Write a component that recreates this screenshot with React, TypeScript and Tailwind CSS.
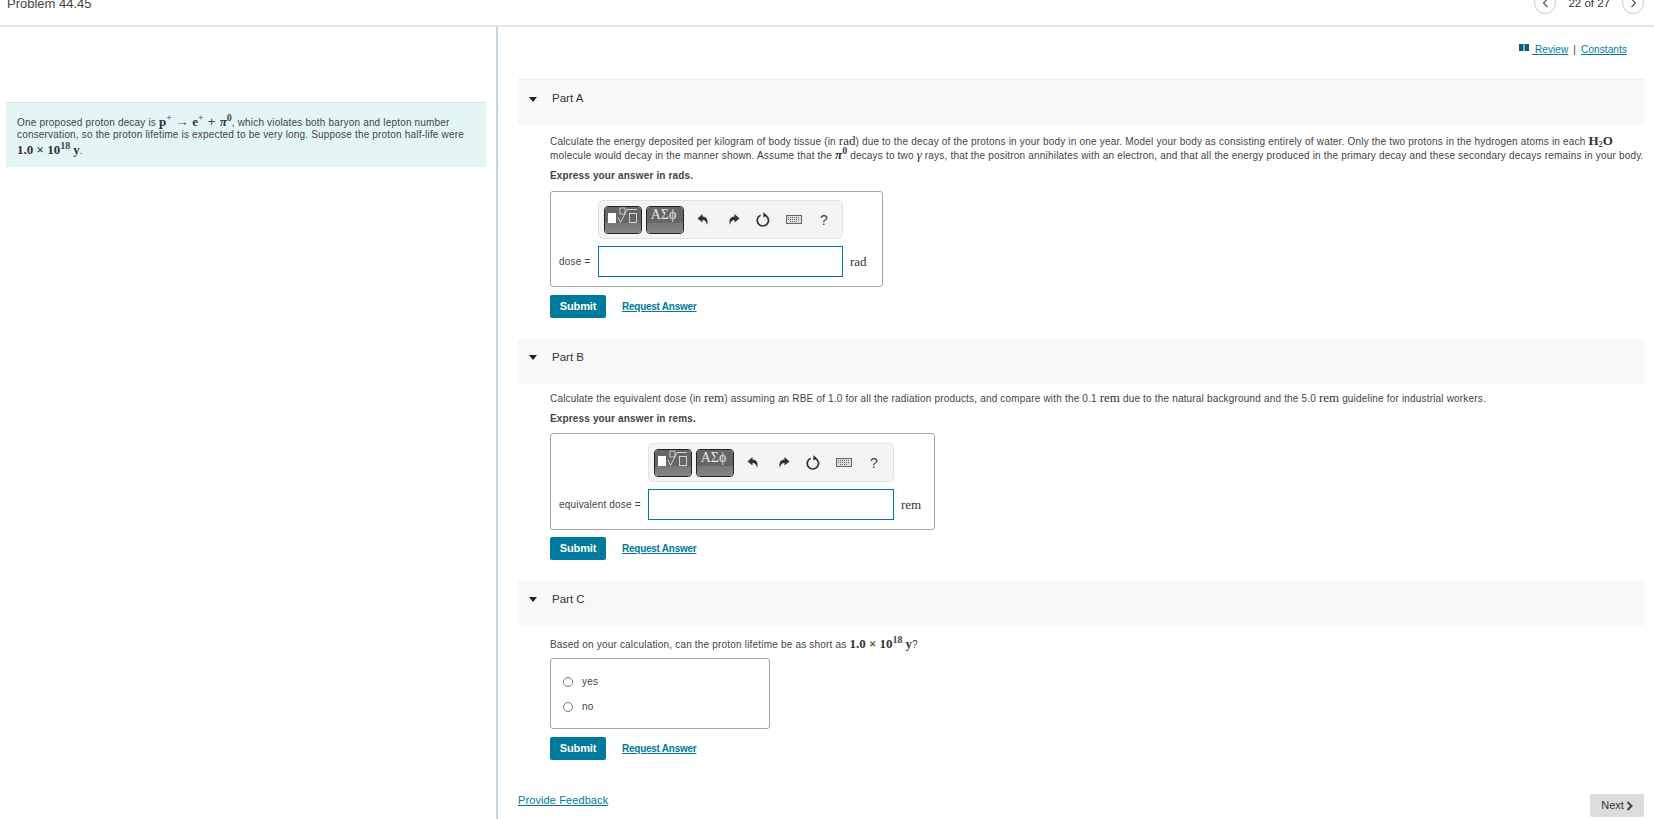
import React from 'react';

const sans = 'font-["Liberation_Sans",Arial,sans-serif]';
const serif = 'font-["Liberation_Serif","Times_New_Roman",serif]';

const M: React.FC<{ children: React.ReactNode; b?: boolean; i?: boolean }> = ({ children, b, i }) => (
  <span className={`${serif} text-[13px] ${b ? 'font-bold' : ''} ${i ? 'italic' : ''} tracking-normal text-[#333]`}>{children}</span>
);

const Sup: React.FC<{ children: React.ReactNode }> = ({ children }) => (
  <sup className={`${serif} text-[10px] font-bold tracking-normal`}>{children}</sup>
);

const PaletteButton: React.FC<{ children: React.ReactNode }> = ({ children }) => (
  <div className="h-[28px] w-[38px] rounded-[4px] border border-[#222] overflow-hidden flex flex-col">
    <div className="h-[16px] bg-[#666] flex items-center justify-center text-[#e4e4e4]">{children}</div>
    <div className="flex-1 bg-gradient-to-b from-[#777] to-[#858585]" />
  </div>
);

const Toolbar: React.FC<{ width: string }> = ({ width }) => (
  <div className={`flex items-center h-[39px] ${width} rounded-[5px] border border-[#e2e2e2] bg-[#f4f4f4] pl-[5px]`}>
    <PaletteButton>
      <svg width="36" height="16" viewBox="0 0 36 16">
        <rect x="3" y="6" width="8" height="10" fill="#fff" />
        <rect x="15" y="1" width="5" height="6" fill="none" stroke="#ddd" strokeWidth="0.8" />
        <path d="M13 10l2.5 5.5L22 2.5h10" fill="none" stroke="#ddd" strokeWidth="0.9" />
        <rect x="24.5" y="6.5" width="7" height="9" fill="none" stroke="#ddd" strokeWidth="0.9" />
      </svg>
    </PaletteButton>
    <div className="w-[4px]" />
    <PaletteButton>
      <span className={`${serif} text-[14px] leading-none tracking-normal -ml-[3px]`}>ΑΣϕ</span>
    </PaletteButton>
    <svg width="12" height="13" viewBox="0 0 12 13" className="ml-[13px]">
      <path d="M5.5 1L0.5 5.5 5.5 9.5V7C8 7 9.5 8.5 10 12 11.5 7.5 10 3.8 5.5 3.6Z" fill="#333" />
    </svg>
    <svg width="12" height="13" viewBox="0 0 12 13" className="ml-[19px]">
      <path d="M6.5 1L11.5 5.5 6.5 9.5V7C4 7 2.5 8.5 2 12 0.5 7.5 2 3.8 6.5 3.6Z" fill="#333" />
    </svg>
    <svg width="14" height="15" viewBox="0 0 14 15" className="ml-[16px]">
      <path d="M8.6 3.1A5.6 5.6 0 1 1 4.6 3.3" fill="none" stroke="#333" strokeWidth="1.7" />
      <path d="M7.3 0.2L10.7 3 7.3 5.4Z" fill="#333" />
    </svg>
    <svg width="16" height="9" viewBox="0 0 16 9" className="ml-[16px]">
      <rect x="0.5" y="0.5" width="15" height="8" fill="#dedede" stroke="#666" />
      <path d="M2 2.5h12M2 4.5h12M4 6.5h8" stroke="#666" strokeWidth="1" strokeDasharray="1 1" />
    </svg>
    <span className="ml-[18px] text-[14px] text-[#444] leading-none tracking-normal">?</span>
  </div>
);

const Header: React.FC<{ title: string; tall?: boolean }> = ({ title, tall }) => (
  <div className={`${tall ? 'h-[46px] border-t border-[#eeeeee] pb-[7px]' : 'h-[45px] pb-[8px]'} bg-[#f8f8f8] flex items-center pl-[11px] shrink-0`}>
    <svg width="8" height="5" viewBox="0 0 8 5" className="mr-[15px]">
      <path d="M0 0h8L4 5Z" fill="#222" />
    </svg>
    <span className="text-[11.5px] text-[#333]">{title}</span>
  </div>
);

const Actions: React.FC<{ gap: string }> = ({ gap }) => (
  <div className={`flex items-center ${gap}`}>
    <button className="w-[56px] h-[23px] rounded-[2px] bg-[#007a9c] text-white text-[11px] tracking-[-0.1px] font-bold">Submit</button>
    <a className="ml-[16px] text-[10px] tracking-[-0.25px] font-bold text-[#007a9c] underline">Request Answer</a>
  </div>
);

const AnswerBox: React.FC<{ label: string; unit: string; box: string; toolbarGap: string; gutter: string; field: string }> = ({ label, unit, box, toolbarGap, gutter, field }) => (
  <div className={`${box} rounded-[3px] border border-[#a5a5a5] ${toolbarGap}`}>
    <div className="flex">
      <div className={`${gutter} shrink-0`} />
      <Toolbar width={field} />
    </div>
    <div className="flex items-center mt-[7px]">
      <div className={`${gutter} shrink-0 pl-[8px] text-[10px] text-[#444]`}>{label}</div>
      <div className={`${field} h-[31px] border border-[#007a9c] bg-white`} />
      <span className={`${serif} text-[13px] tracking-normal text-[#333] ml-[7px]`}>{unit}</span>
    </div>
  </div>
);

export default function App() {
  return (
    <div className={`${sans} w-[1654px] h-[819px] overflow-hidden bg-white text-[#333] flex flex-col`}>
      <div className="h-[27px] shrink-0 border-b-2 border-[#e4e4e4] flex items-start justify-between pl-[7px] pr-[10px]">
        <span className="text-[13px] text-[#444] leading-[16px] -mt-[4px]">Problem 44.45</span>
        <div className="flex items-center -mt-[8px] text-[11.5px] text-[#333]">
          <div className="w-[22px] h-[22px] rounded-full border border-[#ccc] flex items-center justify-center">
            <svg width="7" height="10" viewBox="0 0 7 10"><path d="M5.5 1L1.5 5l4 4" fill="none" stroke="#555" strokeWidth="1.2" /></svg>
          </div>
          <span className="mx-[12px] mt-[2px]">22 of 27</span>
          <div className="w-[22px] h-[22px] rounded-full border border-[#ccc] flex items-center justify-center">
            <svg width="7" height="10" viewBox="0 0 7 10"><path d="M1.5 1l4 4-4 4" fill="none" stroke="#555" strokeWidth="1.2" /></svg>
          </div>
        </div>
      </div>

      <div className="flex flex-1 min-h-0">
        <div className="w-[498px] shrink-0 border-r-2 border-[#c2d4e2] pl-[6px] pr-[10px] pt-[75px]">
          <div className="w-[480px] h-[65px] bg-[#e4f5f5] border-t border-[#dddddd] pl-[11px] pt-[11px] text-[10px] tracking-[0.18px] text-[#444]">
            <div className="h-[13px] leading-[13px] whitespace-nowrap">
              One proposed proton decay is <M b>p</M><sup className={`${serif} text-[10px]`}>+</sup><span className="text-[#666] mx-[3px] text-[14px] leading-none">→</span><M b>e</M><sup className={`${serif} text-[10px]`}>+</sup><span className="mx-[4px] text-[13px] leading-none">+</span><M b i>π</M><Sup>0</Sup>, which violates both baryon and lepton number
            </div>
            <div className="h-[13px] mt-[1px] leading-[13px] whitespace-nowrap">conservation, so the proton lifetime is expected to be very long. Suppose the proton half-life were</div>
            <div className="h-[13px] leading-[13px] mt-[2px] whitespace-nowrap"><M b>1.0 × 10</M><Sup>18</Sup> <M b>y</M>.</div>
          </div>
        </div>

        <div className="flex-1 min-w-0 pl-[20px] pr-[10px] flex flex-col">
          <div className="h-[52px] shrink-0 flex justify-end items-start pt-[15px] pr-[17px] text-[10px] text-[#007a9c] tracking-[0.1px]">
            <svg width="10" height="7" viewBox="0 0 10 7" className="mt-[2px]"><path d="M0 0h4.5v7H0ZM5.5 0H10v7H5.5Z" fill="#0a5f78" /></svg>
            <a className="underline ml-[3px]">&nbsp;Review</a>
            <span className="mx-[5px] text-[#444]">|</span>
            <a className="underline">Constants</a>
          </div>

          <Header title="Part A" tall />
          <div className="pl-[32px] pt-[9px] text-[10px] tracking-[0.19px] text-[#444] whitespace-nowrap">
            <div className="h-[14px] leading-[14px]">
              Calculate the energy deposited per kilogram of body tissue (in <M>rad</M>) due to the decay of the protons in your body in one year. Model your body as consisting entirely of water. Only the two protons in the hydrogen atoms in each <M b>H</M><sub className={`${serif} text-[8px] font-bold`}>2</sub><M b>O</M>
            </div>
            <div className="h-[14px] leading-[14px]">
              molecule would decay in the manner shown. Assume that the <M b i>π</M><Sup>0</Sup> decays to two <M i>γ</M> rays, that the positron annihilates with an electron, and that all the energy produced in the primary decay and these secondary decays remains in your body.
            </div>
            <div className="h-[14px] font-bold mt-[7px] leading-[14px] tracking-[0.15px]">Express your answer in rads.</div>
            <div className="mt-[8px]">
              <AnswerBox label="dose =" unit="rad" box="w-[333px] h-[96px]" toolbarGap="pt-[8px]" gutter="w-[47px]" field="w-[245px]" />
            </div>
            <Actions gap="mt-[8px]" />
          </div>

          <div className="mt-[21px]"><Header title="Part B" /></div>
          <div className="pl-[32px] pt-[7px] text-[10px] tracking-[0.18px] text-[#444] whitespace-nowrap">
            <div className="h-[14px] leading-[14px]">
              Calculate the equivalent dose (in <M>rem</M>) assuming an RBE of 1.0 for all the radiation products, and compare with the 0.1 <M>rem</M> due to the natural background and the 5.0 <M>rem</M> guideline for industrial workers.
            </div>
            <div className="h-[14px] font-bold mt-[7px] leading-[14px] tracking-[0.15px]">Express your answer in rems.</div>
            <div className="mt-[7px]">
              <AnswerBox label="equivalent dose =" unit="rem" box="w-[385px] h-[97px]" toolbarGap="pt-[9px]" gutter="w-[97px]" field="w-[246px]" />
            </div>
            <Actions gap="mt-[7px]" />
          </div>

          <div className="mt-[21px]"><Header title="Part C" /></div>
          <div className="pl-[32px] pt-[11px] text-[10px] tracking-[0.19px] text-[#444] whitespace-nowrap">
            <div className="h-[14px] leading-[14px]">
              Based on your calculation, can the proton lifetime be as short as <M b>1.0 × 10</M><Sup>18</Sup> <M b>y</M>?
            </div>
            <div className="mt-[7px] w-[220px] h-[71px] rounded-[3px] border border-[#a5a5a5] pl-[12px] pt-[10px]">
              <div className="flex items-center h-[25px]">
                <span className="w-[10px] h-[10px] rounded-full border border-[#777] mr-[9px]" />yes
              </div>
              <div className="flex items-center h-[25px]">
                <span className="w-[10px] h-[10px] rounded-full border border-[#777] mr-[9px]" />no
              </div>
            </div>
            <Actions gap="mt-[8px]" />
          </div>

          <div className="flex justify-between items-start mt-[34px]">
            <a className="text-[11px] leading-[14px] -mt-[1px] text-[#007a9c] underline tracking-[0.1px]">Provide Feedback</a>
            <button className="w-[54px] h-[23px] rounded-[2px] bg-[#dcdcdc] text-[11px] text-[#333] flex items-center justify-center">
              Next
              <svg width="7" height="10" viewBox="0 0 7 10" className="ml-[2px]"><path d="M1.5 1l4 4-4 4" fill="none" stroke="#444" strokeWidth="2" /></svg>
            </button>
          </div>
        </div>
      </div>
    </div>
  );
}
